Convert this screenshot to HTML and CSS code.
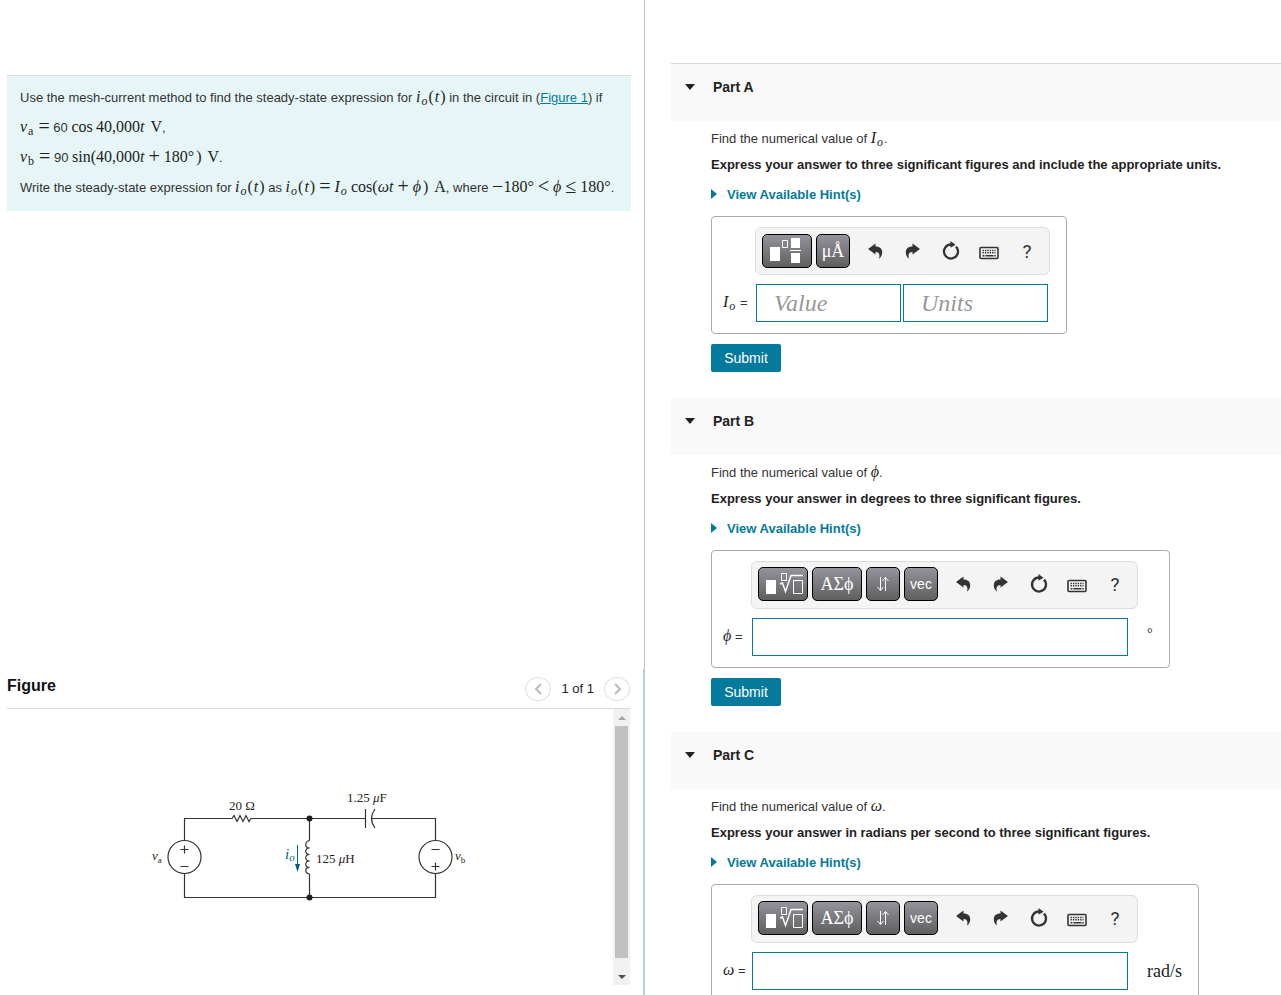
FILE: index.html
```
<!DOCTYPE html>
<html lang="en">
<head>
<meta charset="utf-8">
<title>Mesh-current method</title>
<link rel="stylesheet" href="styles.css">
</head>
<body>
<svg class="sprite" aria-hidden="true">
  <symbol id="undo" viewBox="0 0 16 16"><path d="M1 6 8.500.5v3c4.500 0 6.700 2.300 6.700 5.800 0 2.700-1 4.700-3.200 6.500C13 12 12.500 9 8.500 9v2.500z"/></symbol>
  <symbol id="redo" viewBox="0 0 16 16"><path d="M15 6 7.500.5v3C3 3.500.8 5.800.8 9.300c0 2.700 1 4.700 3.200 6.500C3 12 3.500 9 7.500 9v2.500z"/></symbol>
  <symbol id="reset" viewBox="0 0 20 20"><path d="M15 5.600A7 7 0 1 1 10 3.500" fill="none" stroke="currentColor" stroke-width="2.300"/><path d="M9.500 0v6.800L14.500 3.800z"/></symbol>
  <symbol id="keys" viewBox="0 0 20 14"><rect x="1" y="1.500" width="18" height="11" rx="1" fill="none" stroke="currentColor" stroke-width="1.600"/><path d="M3.500 4.500h13M3.500 6.800h13" stroke="currentColor" stroke-width="1.400" stroke-dasharray="1.400 1"/><path d="M3.500 9.700h2M6.500 9.700h8M15.300 9.700h1.500" stroke="currentColor" stroke-width="1.500"/></symbol>
  <symbol id="root" viewBox="0 0 40 26"><path d="M3 9h10v14H3z"/><path d="M18.500 2.500h5v7h-5zM30.500 9.500h9v13h-9z" fill="none" stroke="currentColor"/><path d="M17 13l2.500-1L22.500 20.500 28 4.500H40" fill="none" stroke="currentColor" stroke-width="1.400"/></symbol>
  <symbol id="frac" viewBox="0 0 34 28"><path d="M0 10h10v14H0zM21 1h9v10h-9zM21 16h9v10h-9zM20 13h11v1H20z"/><path d="M12.500 3.500h5v7h-5z" fill="none" stroke="currentColor"/></symbol>
  <symbol id="updown" viewBox="0 0 14 18"><path d="M4.500 2v13M1.500 12l3 3.500 3-3.500M9.500 16V3M6.500 6l3-3.500 3 3.500" fill="none" stroke="currentColor"/></symbol>
</svg>

<div class="page">
  <div class="left">
    <section class="question">
      <div class="statement">
        <p>Use the mesh-current method to find the steady-state expression for <span class="math"><i>i<sub>o</sub></i>(<i class="arg">t</i>)</span> in the circuit in (<a href="#figure">Figure 1</a>) if</p>
        <p><span class="math"><i>v</i><sub>a</sub> <span class="rel">=</span></span> 60 <span class="math">cos&thinsp;40,000<i>t</i> <span class="si">V</span></span>,</p>
        <p><span class="math"><i>v</i><sub>b</sub> <span class="rel">=</span></span> 90 <span class="math">sin(40,000<i>t</i> <span class="rel">+</span> 180°<span class="close">)</span> <span class="si">V</span></span>.</p>
        <p>Write the steady-state expression for <span class="math"><i>i<sub>o</sub></i>(<i class="arg">t</i>)</span> as <span class="math"><i>i<sub>o</sub></i>(<i class="arg">t</i>) <span class="rel">=</span> <i>I<sub>o</sub></i>&thinsp;cos(<i>ωt</i> <span class="rel">+</span> <i>ϕ</i><span class="close">)</span> <span class="si">A</span></span>, where <span class="math"><span class="rel">−</span>180° <span class="rel">&lt;</span> <i>ϕ</i> <span class="rel">≤</span> 180°</span>.</p>
      </div>
    </section>
    <section class="figure" id="figure">
      <header class="figure-head">
        <h2>Figure</h2>
        <nav class="pager">
          <button aria-label="Previous figure"><svg width="10" height="14" viewBox="0 0 10 14"><path d="M8 2 3 7l5 5"/></svg></button>
          <span>1 of 1</span>
          <button aria-label="Next figure"><svg width="10" height="14" viewBox="0 0 10 14"><path d="M3 2l5 5-5 5"/></svg></button>
        </nav>
      </header>
      <div class="figure-body">
        <div class="canvas">
          <svg class="circuit" width="340" height="134" viewBox="0 0 340 134" role="img" aria-label="Circuit diagram">
            <g class="wire">
              <path d="M44.500 60.500V38.500H92l2-3 3 6 3-6 3 6 3-6 3 6 2-3H225.500M232 38.500H295.500V60.500M295.500 93.500V117.500H44.500V93.500M169.500 38.500V60.500M169.500 94V117.500"/>
              <path d="M225.500 29V48M235 29q-7 9.500 0 19"/>
              <path d="M169.500 60.500c-5 1-5 8 0 7.500c-5-.5-5 7 0 6.500c-5-.5-5 7 0 6.500c-5-.5-5 7 0 6.500c-5-.5-5 5.500 0 6.500"/>
              <circle cx="44.500" cy="77" r="16.500"/><circle cx="295.500" cy="77" r="16.500"/>
              <path d="M40.500 69.500h8M44.500 65.500v8M40.500 86.500h8M291.500 69.500h8M291.500 86.500h8M295.500 82.500v8"/>
            </g>
            <circle cx="169.500" cy="38.500" r="3"/><circle cx="169.500" cy="117.500" r="3"/>
            <path d="M157.500 65V86" class="current-line"/><path d="M155 84h5l-2.500 8z" class="current"/>
            <text x="89" y="30">20 Ω</text>
            <text x="207" y="22">1.25 <tspan class="it">μ</tspan>F</text>
            <text x="176" y="83">125 <tspan class="it">μ</tspan>H</text>
            <text x="12" y="80"><tspan class="it">v</tspan><tspan class="small" dy="3">a</tspan></text>
            <text x="315" y="80"><tspan class="it">v</tspan><tspan class="small" dy="3">b</tspan></text>
            <text x="145" y="79" class="current it big">i<tspan class="small" dy="2">o</tspan></text>
          </svg>
        </div>
        <div class="scrollbar" aria-hidden="true"><span class="up"></span><span class="thumb"></span><span class="down"></span></div>
      </div>
    </section>
  </div>

  <main class="right">
    <section class="part">
      <header class="part-head"><span class="caret"></span><h2>Part A</h2></header>
      <div class="part-body">
        <p>Find the numerical value of <span class="math"><i>I<sub>o</sub></i></span>.</p>
        <p class="strong">Express your answer to three significant figures and include the appropriate units.</p>
        <a class="hint" href="#hints-a">View Available Hint(s)</a>
        <div class="answer wide-label">
          <div class="toolbar">
            <button class="key wide" aria-label="Templates"><svg width="34" height="28"><use href="#frac"/></svg></button>
            <button class="key serif">μÅ</button>
            <div class="tools">
              <button aria-label="Undo"><svg width="16" height="16"><use href="#undo"/></svg></button>
              <button aria-label="Redo"><svg width="16" height="16"><use href="#redo"/></svg></button>
              <button aria-label="Reset"><svg width="20" height="20"><use href="#reset"/></svg></button>
              <button aria-label="Keyboard shortcuts"><svg class="kbd" width="20" height="14"><use href="#keys"/></svg></button>
              <button>?</button>
            </div>
          </div>
          <div class="entry">
            <label for="value"><span class="math"><i>I<sub>o</sub></i></span> =</label>
            <input id="value" class="half" type="text" placeholder="Value">
            <input class="half" type="text" placeholder="Units" aria-label="Units">
          </div>
        </div>
        <button class="submit">Submit</button>
      </div>
    </section>

    <section class="part">
      <header class="part-head"><span class="caret"></span><h2>Part B</h2></header>
      <div class="part-body">
        <p>Find the numerical value of <span class="math"><i>ϕ</i></span>.</p>
        <p class="strong">Express your answer in degrees to three significant figures.</p>
        <a class="hint" href="#hints-b">View Available Hint(s)</a>
        <div class="answer">
          <div class="toolbar">
            <button class="key wide" aria-label="Templates"><svg width="40" height="26"><use href="#root"/></svg></button>
            <button class="key wide serif">ΑΣϕ</button>
            <button class="key" aria-label="Subscript and superscript"><svg width="14" height="18"><use href="#updown"/></svg></button>
            <button class="key">vec</button>
            <div class="tools">
              <button aria-label="Undo"><svg width="16" height="16"><use href="#undo"/></svg></button>
              <button aria-label="Redo"><svg width="16" height="16"><use href="#redo"/></svg></button>
              <button aria-label="Reset"><svg width="20" height="20"><use href="#reset"/></svg></button>
              <button aria-label="Keyboard shortcuts"><svg class="kbd" width="20" height="14"><use href="#keys"/></svg></button>
              <button>?</button>
            </div>
          </div>
          <div class="entry">
            <label for="phi"><span class="math"><i>ϕ</i></span> =</label>
            <input id="phi" type="text">
            <span class="unit degree">°</span>
          </div>
        </div>
        <button class="submit">Submit</button>
      </div>
    </section>

    <section class="part">
      <header class="part-head"><span class="caret"></span><h2>Part C</h2></header>
      <div class="part-body">
        <p>Find the numerical value of <span class="math"><i>ω</i></span>.</p>
        <p class="strong">Express your answer in radians per second to three significant figures.</p>
        <a class="hint" href="#hints-c">View Available Hint(s)</a>
        <div class="answer">
          <div class="toolbar">
            <button class="key wide" aria-label="Templates"><svg width="40" height="26"><use href="#root"/></svg></button>
            <button class="key wide serif">ΑΣϕ</button>
            <button class="key" aria-label="Subscript and superscript"><svg width="14" height="18"><use href="#updown"/></svg></button>
            <button class="key">vec</button>
            <div class="tools">
              <button aria-label="Undo"><svg width="16" height="16"><use href="#undo"/></svg></button>
              <button aria-label="Redo"><svg width="16" height="16"><use href="#redo"/></svg></button>
              <button aria-label="Reset"><svg width="20" height="20"><use href="#reset"/></svg></button>
              <button aria-label="Keyboard shortcuts"><svg class="kbd" width="20" height="14"><use href="#keys"/></svg></button>
              <button>?</button>
            </div>
          </div>
          <div class="entry">
            <label for="omega"><span class="math"><i>ω</i></span> =</label>
            <input id="omega" type="text">
            <span class="unit">rad/s</span>
          </div>
        </div>
      </div>
    </section>
  </main>
</div>
</body>
</html>
```

FILE: styles.css
```
* { box-sizing: border-box; }

body {
  margin: 0;
  background: #fff;
  color: #333;
  font: 13px "Liberation Sans", Arial, sans-serif;
}

p, h2 { margin: 0; }
button { font-family: inherit; cursor: pointer; }
svg { fill: currentColor; }
.sprite { display: none; }

.page {
  display: grid;
  grid-template-columns: 645fr 636fr;
  height: 100vh;
  overflow: hidden;
}

.math {
  font: 16px "Liberation Serif", "Times New Roman", serif;
  color: #222;
  white-space: nowrap;
}
.math sub { font-size: 12px; line-height: 0; vertical-align: -3px; margin: 0 1px; }
.rel { font-size: 20px; line-height: 0; vertical-align: -1px; }
.arg { margin: 0 1px; }
.close { margin-left: 2px; }
.si { margin-left: 2px; }

/* Left pane */
.left { display: flex; flex-direction: column; min-height: 0; }
.question {
  flex: 1;
  padding: 75px 13px 0 7px;
  border-right: 1px solid #b9cbdb;
}
.statement {
  padding: 7px 12px 8px 13px;
  border-top: 1px solid #d6dee0;
  background: #e6f6f7;
}
.statement p { line-height: 30px; white-space: nowrap; }
.statement .math { line-height: 20px; }
a { color: #047a9c; }

.figure {
  display: flex;
  flex-direction: column;
  height: 326px;
  padding: 0 13px 10px 7px;
  border-right: 2px solid #b9cbdb;
}
.figure-head {
  display: flex;
  align-items: center;
  justify-content: space-between;
  height: 40px;
  border-bottom: 1px solid #d9d9d9;
}
.figure-head h2 { font-size: 16px; color: #111; padding-bottom: 6px; }
.pager { display: flex; align-items: center; gap: 10px; color: #222; }
.pager button {
  display: grid;
  place-items: center;
  width: 26px;
  height: 24px;
  padding: 0;
  border: 1px solid #e0e0e0;
  border-radius: 50%;
  background: #fff;
}
.pager path { fill: none; stroke: #bbb; stroke-width: 2; }
.figure-body { flex: 1; display: flex; min-height: 0; }
.canvas { flex: 1; display: grid; place-items: center; }

.circuit { fill: #231f20; font: 13px "Liberation Serif", "Times New Roman", serif; }
.wire { fill: none; stroke: #333; stroke-width: 1.2; }
.it { font-style: italic; }
.small { font-size: 9px; }
.big { font-size: 15px; }
.big .small { font-size: 11px; }
.current { fill: #005f83; }
.current-line { stroke: #005f83; }

.scrollbar {
  display: flex;
  flex-direction: column;
  align-items: center;
  width: 17px;
  background: #f1f1f1;
}
.up, .down { border: 4px solid transparent; }
.up { border-top: 0; border-bottom-color: #a3a3a3; margin: 7px 0 6px; }
.down { border-bottom: 0; border-top-color: #505050; margin: 17px 0 6px; }
.thumb { flex: 1; width: 13px; background: #c1c1c1; }

/* Right pane */
.right { padding: 63px 0 0 26px; min-width: 0; overflow: hidden; }
.part:first-child { border-top: 1px solid #d6d8db; }
.part-head {
  display: flex;
  align-items: center;
  height: 57px;
  padding: 0 14px 11px;
  background: #f9f9f9;
}
.part-head h2 { font-size: 14px; color: #222; }
.caret {
  margin-right: 18px;
  border: 5px solid transparent;
  border-top: 6px solid #222;
  border-bottom: 0;
}
.part-body { padding: 5px 0 26px 40px; }
.part-body p { line-height: 26px; height: 26px; white-space: nowrap; }
.part-body p .math { line-height: 20px; }
.strong { font-weight: bold; color: #222; }
.hint {
  display: flex;
  align-items: center;
  height: 32px;
  font-weight: bold;
  text-decoration: none;
}
.hint::before {
  content: "";
  margin-right: 10px;
  border: 5px solid transparent;
  border-left: 6px solid #047a9c;
  border-right: 0;
}

.answer {
  width: fit-content;
  margin: 6px 0 10px;
  padding: 10px 16px 11px 11px;
  border: 1px solid #aaa;
  border-radius: 4px;
}
.toolbar {
  display: flex;
  gap: 4px;
  width: fit-content;
  height: 48px;
  margin: 0 0 9px 28px;
  padding: 5px 3px 0 6px;
  border: 1px solid #ddd;
  border-radius: 6px;
  background: #f4f4f4;
}
.wide-label .toolbar { margin-left: 32px; padding-top: 6px; }
.key {
  display: grid;
  place-items: center;
  width: 34px;
  height: 34px;
  padding: 0;
  border: 1px solid #000;
  border-radius: 5px;
  background: linear-gradient(#95939c, #5f5f5f);
  color: #fff;
  font-size: 14px;
}
.key.wide { width: 50px; }
.serif { font-family: "Liberation Serif", serif; font-size: 18px; }
.tools { display: flex; margin-left: 2px; }
.tools button {
  display: grid;
  place-items: center;
  width: 38px;
  height: 34px;
  padding: 0;
  border: 0;
  background: none;
  color: #333;
  font: 19px Roboto, sans-serif;
}
.kbd { margin-top: 4px; }

.entry { display: flex; align-items: center; gap: 2px; }
.entry label { width: 27px; padding-bottom: 2px; white-space: nowrap; }
.wide-label label { width: 31px; }
.entry input {
  width: 376px;
  height: 38px;
  padding: 0 17px;
  border: 1px solid #047a9c;
  border-radius: 0;
  background: #fff;
  font: italic 24px "Liberation Serif", serif;
}
.entry .half { width: 145px; }
.entry input::placeholder { color: #999; opacity: 1; }
.unit { margin-left: 17px; font: 18px "Liberation Serif", serif; color: #222; }
.degree { font-size: 14px; padding-bottom: 6px; }

.submit {
  display: block;
  width: 70px;
  height: 28px;
  padding: 0;
  border: 0;
  border-radius: 2px;
  background: #047a9c;
  color: #fff;
  font-size: 14px;
}
```
